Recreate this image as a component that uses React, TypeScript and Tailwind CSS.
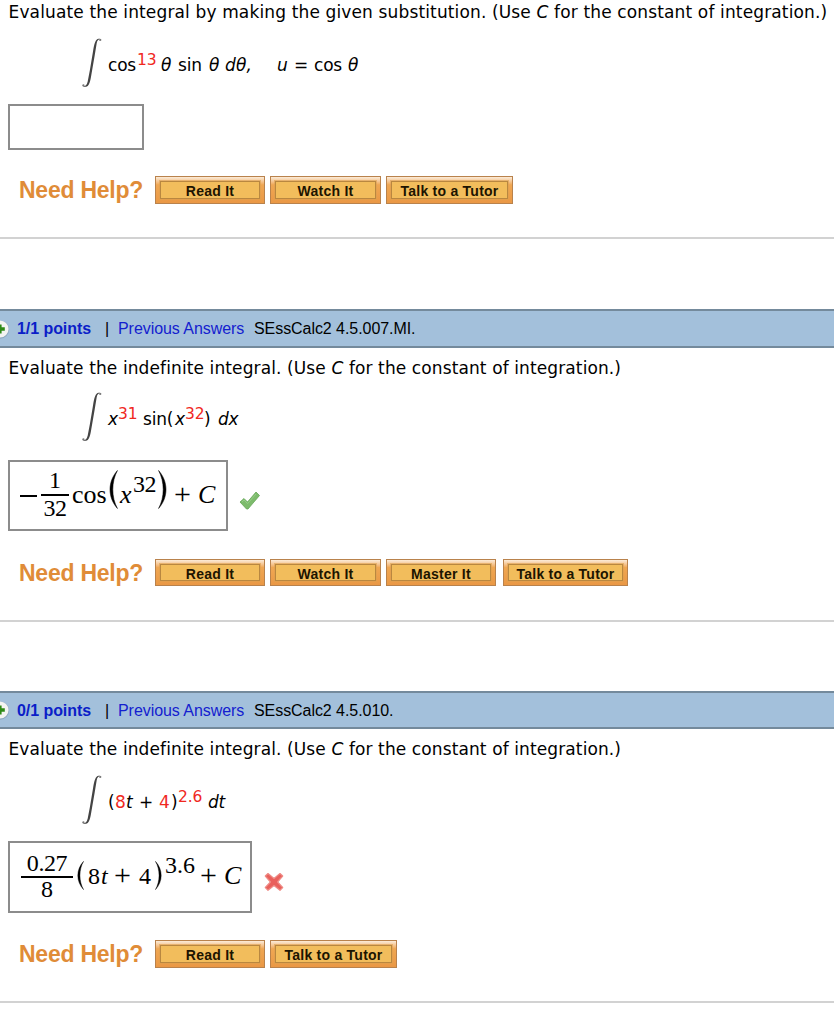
import type { ReactNode } from "react";

const sans = "font-['DejaVu_Sans','Liberation_Sans',sans-serif]";
const serif = "font-['Liberation_Serif',serif]";
const arial = "font-['Liberation_Sans',sans-serif]";

/* A single symbol or word of a formula; the class sets its advance width. */
function T({ c, children }: { c: string; children: ReactNode }) {
  return <span className={`block shrink-0 whitespace-pre ${c}`}>{children}</span>;
}

function IntegralSign() {
  return (
    <svg className="ml-[81px] h-[50px] w-[22px] shrink-0" viewBox="0 0 22 50" fill="none">
      <path
        d="M20.2 2.2C19.6 .7 16.6 .3 15.7 5.2L13.6 18L10.4 36.5C9.3 43.5 8.3 48.4 4.8 48.8C3.5 48.9 2.1 48.7 1.4 47.3C3.1 48.6 5.7 48.5 6.7 43.5L8.9 32L12 13.5C13.2 5.5 14.6 1 17.6.7C19 .6 20.4 1 20.2 2.2Z"
        fill="#444"
      />
      <circle cx="19.2" cy="2" r="1.1" fill="#777" />
      <circle cx="2.4" cy="47.4" r="1.1" fill="#777" />
    </svg>
  );
}

function Formula({ pt, children }: { pt: string; children: ReactNode }) {
  return (
    <div className={`flex h-[80px] items-start ${pt} ${sans} text-[17px] leading-[20px] tracking-[-0.2px]`}>
      <IntegralSign />
      <div className="ml-[5px] flex items-baseline pt-[17px]">{children}</div>
    </div>
  );
}

function Title({ c, children }: { c: string; children: ReactNode }) {
  return (
    <h2 className={`h-6 pl-[8.5px] text-[17px] leading-6 font-normal whitespace-nowrap ${sans} ${c}`}>{children}</h2>
  );
}

function HelpButton({ c, children }: { c: string; children: ReactNode }) {
  return (
    <button
      className={`flex h-full shrink-0 border border-[#b9824c] bg-linear-to-b from-[#fbebd8] via-[#efa753] via-30% to-[#ea9845] p-[4px] ${c}`}
    >
      <span className={`flex h-full w-full items-center justify-center border-[1.5px] border-[#b98740] bg-[#f2bd5c] pt-[2px] ${arial} text-[14px] leading-none font-bold tracking-[0.25px] whitespace-nowrap text-[#1c1400] outline outline-[#dea04e]/60`}>
        {children}
      </span>
    </button>
  );
}

function HelpRow({ c, children }: { c: string; children: ReactNode }) {
  return (
    <div className={`flex pl-[19px] ${c}`}>
      <span className={`w-[136px] shrink-0 ${arial} text-[23px] leading-[28px] font-bold tracking-[-0.25px] whitespace-nowrap text-[#e08c38]`}>
        Need Help?
      </span>
      {children}
    </div>
  );
}

function Header({ c, points, code }: { c: string; points: string; code: string }) {
  return (
    <header className={`flex items-center border-y-2 border-[#748a9c] bg-[#a3c0db] ${arial} text-[16px] leading-5 tracking-[-0.06px] whitespace-nowrap ${c}`}>
      <svg className="h-[20px] w-[17px] shrink-0" viewBox="0 0 17 20">
        <circle cx="0" cy="10.6" r="9.2" fill="#7e98ae" opacity=".6" />
        <circle cx="0" cy="10" r="8.6" fill="#f4f4f2" />
        <path d="M-5 8.3H-2V5.5H1.6V8.3H4.8V11.7H1.6V14.5H-2V11.7H-5Z" fill="#2f8a17" />
      </svg>
      <b className="w-[88px] shrink-0 pt-px text-[#0b1ec8]">{points}</b>
      <span className="w-[13px] shrink-0 pt-px">|</span>
      <a className="w-[136px] shrink-0 pt-px text-[#1420cf]">Previous Answers</a>
      <span className="pt-px">{code}</span>
    </header>
  );
}

function Paren({ c, flip }: { c: string; flip?: boolean }) {
  return (
    <svg className={`shrink-0 ${c}`} viewBox="0 0 8 40" preserveAspectRatio="none">
      <path
        d={flip ? "M.5.5C9.3 12 9.3 28 .5 39.5C6 28 6 12 .5.5Z" : "M7.5.5C-1.3 12-1.3 28 7.5 39.5C2 28 2 12 7.5.5Z"}
        fill="#000"
        stroke="#000"
        strokeWidth=".5"
      />
    </svg>
  );
}

const box = "flex shrink-0 items-start border-2 border-[#8c8c8c]";

export default function App() {
  return (
    <main className="h-[1024px] w-[834px] overflow-hidden bg-white text-black">
      <section className="h-[309px]">
        <Title c="tracking-[0.14px]">
          Evaluate the integral by making the given substitution. (Use <i>C</i> for the constant of integration.)
        </Title>
        <Formula pt="pt-[14px]">
          <T c="w-[29px]">cos</T>
          <T c="w-[24px] -translate-y-[6px] text-[15.5px] text-[#f0281e]">13</T>
          <T c="w-[17px] italic">θ</T>
          <T c="w-[31px]">sin</T>
          <T c="w-[16px] italic">θ</T>
          <T c="w-[52px] italic tracking-[0.2px]">dθ,</T>
          <T c="w-[17px] italic">u</T>
          <T c="w-[20px]">=</T>
          <T c="w-[34px]">cos</T>
          <T c="w-[14px] italic">θ</T>
        </Formula>
        <div className="pl-[8px]">
          <div className={`${box} h-[46px] w-[136px]`} />
        </div>
        <HelpRow c="mt-[26px] h-[28px]">
          <HelpButton c="mr-[5px] w-[110px]">Read It</HelpButton>
          <HelpButton c="mr-[5px] w-[111px]">Watch It</HelpButton>
          <HelpButton c="w-[127px]">Talk to a Tutor</HelpButton>
        </HelpRow>
        <hr className="mt-[33px] border-t-2 border-[#d2d2d2]" />
      </section>

      <section className="h-[382px]">
        <Header c="h-[39px]" points="1/1 points" code="SEssCalc2 4.5.007.MI." />
        <Title c="mt-[8px] tracking-[0.11px]">
          Evaluate the indefinite integral. (Use <i>C</i> for the constant of integration.)
        </Title>
        <Formula pt="pt-[12px]">
          <T c="w-[10px] italic">x</T>
          <T c="w-[25px] -translate-y-[6px] text-[15.5px] text-[#f0281e]">31</T>
          <T c="w-[32px]">sin(</T>
          <T c="w-[10px] italic">x</T>
          <T c="w-[19px] -translate-y-[6px] text-[15.5px] text-[#f0281e]">32</T>
          <T c="w-[14px]">)</T>
          <T c="w-[24px] italic">dx</T>
        </Formula>
        <div className="flex pl-[8px]">
          <div className={`${box} h-[71px] w-[220px] ${serif} pl-[10px] text-[24px] leading-[24px]`}>
            <div className="mt-[33px] h-[1.5px] w-[17px] bg-black" />
            <div className="ml-[4px] mt-[6px] flex w-[28px] flex-col items-center">
              <span className="h-[26px]">1</span>
              <span className="h-[2px] w-full bg-black" />
              <span className="h-[24px] tracking-[-0.5px]">32</span>
            </div>
            <T c="ml-[3px] mt-[21px] w-[37px] text-[26px]">cos</T>
            <Paren c="mt-[8px] h-[39px] w-[9px]" />
            <T c="ml-[2px] mt-[21px] w-[13px] text-[26px] italic">x</T>
            <T c="mt-[10px] w-[25px] tracking-[-0.5px]">32</T>
            <Paren flip c="mt-[8px] h-[39px] w-[9px]" />
            <T c="ml-[7px] mt-[20px] w-[24px] text-[30px]">+</T>
            <T c="mt-[21px] w-[18px] text-[26px] italic">C</T>
          </div>
          <svg className="mt-[30px] ml-[11px] h-[22px] w-[22px]" viewBox="0 0 22 22">
            <path d="M1 12L5 8.5L8.5 12L17 2L20.5 5.5L9 19H7.5Z" fill="#7dbb6c" stroke="#65a657" strokeWidth=".8" strokeLinejoin="round" />
            <path d="M3 12L5 10L8.6 13.6L17 4" fill="none" stroke="#94cc86" strokeWidth="1" />
          </svg>
        </div>
        <HelpRow c="mt-[28px] h-[27px]">
          <HelpButton c="mr-[5px] w-[110px]">Read It</HelpButton>
          <HelpButton c="mr-[5px] w-[111px]">Watch It</HelpButton>
          <HelpButton c="mr-[7px] w-[110px]">Master It</HelpButton>
          <HelpButton c="w-[125px]">Talk to a Tutor</HelpButton>
        </HelpRow>
        <hr className="mt-[34px] border-t-2 border-[#d2d2d2]" />
      </section>

      <section>
        <Header c="h-[38px]" points="0/1 points" code="SEssCalc2 4.5.010." />
        <Title c="mt-[8px] tracking-[0.11px]">
          Evaluate the indefinite integral. (Use <i>C</i> for the constant of integration.)
        </Title>
        <Formula pt="pt-[14px]">
          <T c="w-[7px]">(</T>
          <T c="w-[11px] text-[#f0281e]">8</T>
          <T c="w-[13px] italic">t</T>
          <T c="w-[20px]">+</T>
          <T c="w-[12px] text-[#f0281e]">4</T>
          <T c="w-[7px]">)</T>
          <T c="w-[30px] -translate-y-[6px] text-[15.5px] text-[#f0281e]">2.6</T>
          <T c="w-[24px] italic">dt</T>
        </Formula>
        <div className="flex pl-[8px]">
          <div className={`${box} h-[72px] w-[244px] ${serif} pl-[11px] text-[24px] leading-[24px]`}>
            <div className="mt-[8px] flex w-[52px] flex-col items-center">
              <span className="h-[25px] tracking-[-0.4px]">0.27</span>
              <span className="h-[2px] w-full bg-black" />
              <span className="-mt-px h-[24px]">8</span>
            </div>
            <Paren c="mt-[18px] ml-[4px] h-[29px] w-[7px]" />
            <T c="ml-[4px] mt-[21px] w-[13px]">8</T>
            <T c="mt-[21px] w-[13px] italic">t</T>
            <T c="mt-[20px] w-[25px] text-[30px]">+</T>
            <T c="mt-[21px] w-[15px]">4</T>
            <Paren flip c="mt-[18px] ml-px h-[29px] w-[7px]" />
            <T c="ml-[3px] mt-[10px] w-[35px]">3.6</T>
            <T c="mt-[20px] w-[24px] text-[30px]">+</T>
            <T c="mt-[21px] w-[18px] text-[26px] italic">C</T>
          </div>
          <svg className="mt-[31px] ml-[12px] h-[20px] w-[20px]" viewBox="0 0 20 20">
            <path d="M4 1.5L10 6.5L16 1.5L18.7 4L13.5 10L18.7 15.5L16 18.3L10 13.5L4 18.3L1.3 15.5L6.5 10L1.3 4Z" fill="#e9605c" stroke="#ee8a84" strokeWidth="1.2" strokeLinejoin="round" />
          </svg>
        </div>
        <HelpRow c="mt-[27px] h-[28px]">
          <HelpButton c="mr-[5px] w-[110px]">Read It</HelpButton>
          <HelpButton c="w-[127px]">Talk to a Tutor</HelpButton>
        </HelpRow>
        <hr className="mt-[33px] border-t-2 border-[#d2d2d2]" />
      </section>
    </main>
  );
}
